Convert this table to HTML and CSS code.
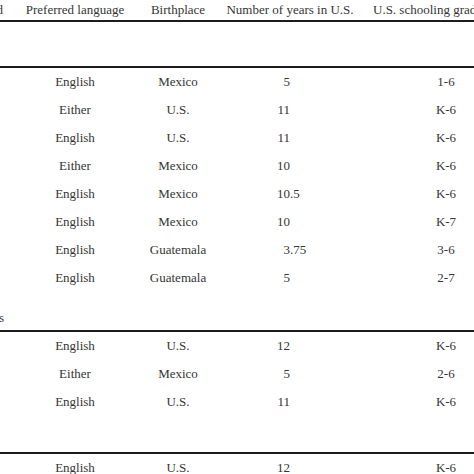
FILE: index.html
```html
<!DOCTYPE html>
<html>
<head>
<meta charset="utf-8">
<link rel="stylesheet" href="styles.css">
</head>
<body>
<div class="table">
  <div class="row head">
    <div class="c1">Child</div>
    <div class="c2">Preferred language</div>
    <div class="c3">Birthplace</div>
    <div class="c4">Number of years in U.S.</div>
    <div class="c5">U.S. schooling grades</div>
  </div>
  <div class="rule"></div>
  <div class="row section s1"><div class="c1"></div></div>
  <div class="rule"></div>
  <div class="row"><div class="c1"></div><div class="c2">English</div><div class="c3">Mexico</div><div class="c4"><span class="int">5</span><span class="frac"></span></div><div class="c5">1-6</div></div>
  <div class="row"><div class="c1"></div><div class="c2">Either</div><div class="c3">U.S.</div><div class="c4"><span class="int">11</span><span class="frac"></span></div><div class="c5">K-6</div></div>
  <div class="row"><div class="c1"></div><div class="c2">English</div><div class="c3">U.S.</div><div class="c4"><span class="int">11</span><span class="frac"></span></div><div class="c5">K-6</div></div>
  <div class="row"><div class="c1"></div><div class="c2">Either</div><div class="c3">Mexico</div><div class="c4"><span class="int">10</span><span class="frac"></span></div><div class="c5">K-6</div></div>
  <div class="row"><div class="c1"></div><div class="c2">English</div><div class="c3">Mexico</div><div class="c4"><span class="int">10</span><span class="frac">.5</span></div><div class="c5">K-6</div></div>
  <div class="row"><div class="c1"></div><div class="c2">English</div><div class="c3">Mexico</div><div class="c4"><span class="int">10</span><span class="frac"></span></div><div class="c5">K-7</div></div>
  <div class="row"><div class="c1"></div><div class="c2">English</div><div class="c3">Guatemala</div><div class="c4"><span class="int">3</span><span class="frac">.75</span></div><div class="c5">3-6</div></div>
  <div class="row"><div class="c1"></div><div class="c2">English</div><div class="c3">Guatemala</div><div class="c4"><span class="int">5</span><span class="frac"></span></div><div class="c5">2-7</div></div>
  <div class="row section s2"><div class="c1">Classrooms</div></div>
  <div class="rule"></div>
  <div class="row"><div class="c1"></div><div class="c2">English</div><div class="c3">U.S.</div><div class="c4"><span class="int">12</span><span class="frac"></span></div><div class="c5">K-6</div></div>
  <div class="row"><div class="c1"></div><div class="c2">Either</div><div class="c3">Mexico</div><div class="c4"><span class="int">5</span><span class="frac"></span></div><div class="c5">2-6</div></div>
  <div class="row"><div class="c1"></div><div class="c2">English</div><div class="c3">U.S.</div><div class="c4"><span class="int">11</span><span class="frac"></span></div><div class="c5">K-6</div></div>
  <div class="row section s3"><div class="c1"></div></div>
  <div class="rule"></div>
  <div class="row"><div class="c1"></div><div class="c2">English</div><div class="c3">U.S.</div><div class="c4"><span class="int">12</span><span class="frac"></span></div><div class="c5">K-6</div></div>
</div>
</body>
</html>
```

FILE: styles.css
```css
html, body {
  margin: 0;
  padding: 0;
  background: #fff;
  overflow: hidden;
}
body {
  width: 474px;
  height: 474px;
  font-family: "Liberation Serif", "DejaVu Serif", serif;
  font-size: 13px;
  color: #353535;
}
.table {
  display: flex;
  flex-direction: column;
  width: 474px;
}
.row {
  display: grid;
  grid-template-columns: 4px 142px 64px 160px 152px;
  height: 28px;
  align-items: center;
  white-space: nowrap;
}
.row > div {
  text-align: center;
  min-width: 0;
}
.row .c1 {
  direction: rtl;
  text-align: right;
  width: 4px;
  box-sizing: border-box;
}
.head {
  height: 20px;
}
.head .c1 {
  padding-right: 1px;
}
.head .c5 {
  text-align: left;
  padding-left: 3px;
}
.rule {
  height: 2px;
  background: #1c1c1c;
}
.section {
  align-items: end;
  box-sizing: border-box;
}
.s1 { height: 44px; }
.s2 { height: 38px; padding-bottom: 4px; }
.s3 { height: 36px; }
.c4 {
  display: flex;
}
.head .c4 {
  display: block;
}
.int {
  width: 80px;
  text-align: right;
}
.frac {
  text-align: left;
}
```
